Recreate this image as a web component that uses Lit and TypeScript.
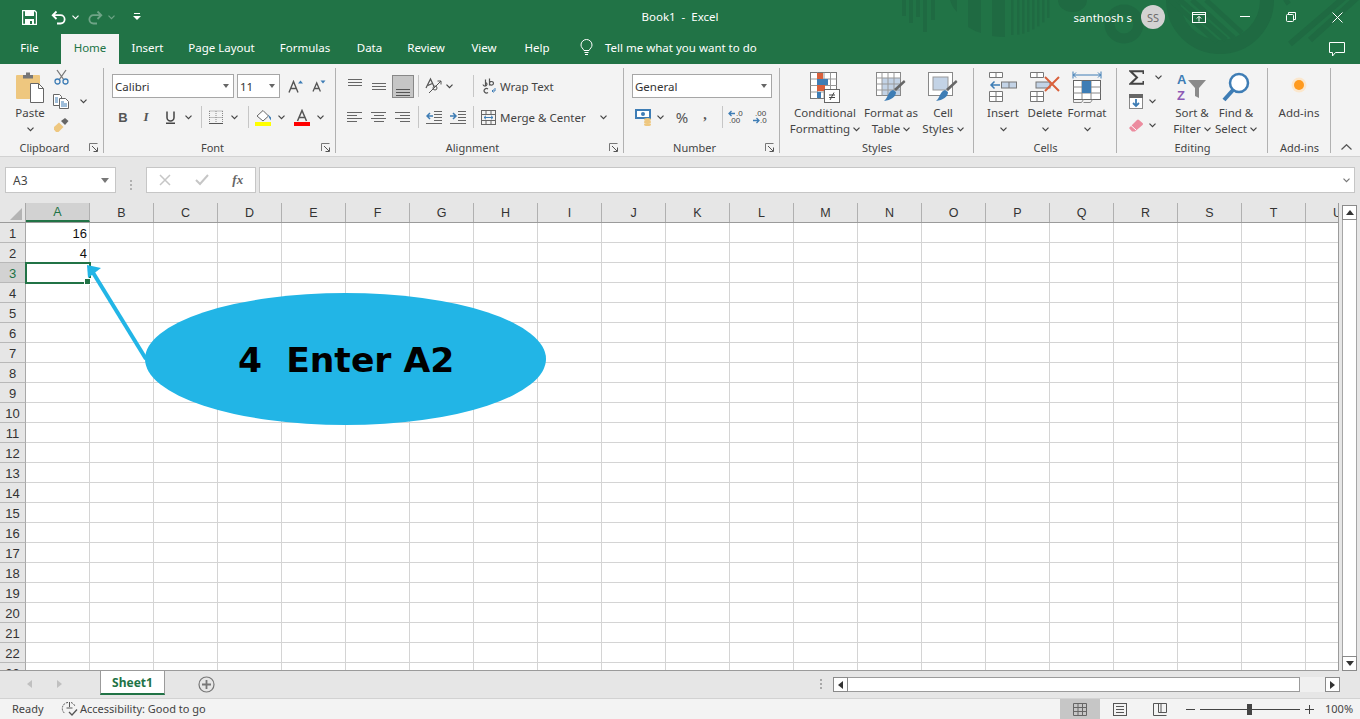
import { LitElement, html, css, svg } from "lit";
import { customElement } from "lit/decorators.js";

const chev = (c = "#444") => html`<svg width="7" height="5" viewBox="0 0 7 5"><path d="M.5.7 3.5 3.7 6.5.7" fill="none" stroke=${c} stroke-width="1.2"/></svg>`;
const lines = (ws: number[], x: number[], y0 = 2, step = 3) => html`<svg width="16" height="14" viewBox="0 0 16 14">${ws.map((w, i) => svg`<rect x=${x[i]} y=${y0 + i * step} width=${w} height="1" fill="#666"></rect>`)}</svg>`;

const I = {
  save: html`<svg width="15" height="15" viewBox="0 0 15 15"><path d="M.5.5h12l2 2v12H.5z" fill="none" stroke="#fff" stroke-width="1.4"/><rect x="3" y="1" width="9" height="5" fill="#fff"/><rect x="3" y="9" width="9" height="5.5" fill="#fff"/><rect x="8" y="11" width="2" height="3" fill="#217346"/></svg>`,
  undo: html`<svg width="15" height="15" viewBox="0 0 15 15"><path d="M5.5 1.5 1.7 5.2 5.5 9M2 5.2h7.5a4 4 0 0 1 0 8.300H6" fill="none" stroke="#fff" stroke-width="1.800"/></svg>`,
  redo: html`<svg width="15" height="15" viewBox="0 0 15 15"><path d="M9.500 1.500 13.300 5.200 9.500 9M13 5.200H5.500a4 4 0 0 0 0 8.300H9" fill="none" stroke="#6fa487" stroke-width="1.800"/></svg>`,
  qat: html`<svg width="8" height="8" viewBox="0 0 8 8"><rect x="1" y="0" width="6" height="1" fill="#fff"/><path d="M0 3h8L4 7z" fill="#fff"/></svg>`,
  decor: html`<svg class="decor" width="480" height="64" viewBox="0 0 480 64"><g fill="#1f6a42"><rect x="22" width="4" height="16"/><rect x="29" width="4" height="23"/><rect x="36" width="4" height="17"/><rect x="43" width="4" height="32"/><rect x="51" width="4" height="20"/><path d="M70 0h7v12q-5-5-7-12z"/><path d="M88 0h13v33q-7-2-13-6z"/><path d="M112 0h13v37q-7 0-13-1z"/>${[131, 137, 142, 147, 152, 157, 162, 167].map((x, i) => svg`<rect x=${x} width="2.500" height=${35 - i * i * .35}></rect>`)}<path d="M178 0h29a14.500 12 0 0 1-29 0z"/></g><g fill="none" stroke="#1f6a42"><circle cx="244" cy="24" r="14.500" stroke-width="10"/><circle cx="340" cy="0" r="47" stroke-width="14"/><path d="M290 0 337 42M300 0 346 40M312 0 354 38M326 0 362 33" stroke-width="5"/><path d="M405 3 409 0M410 44 473-10M430 40 480-5" stroke-width="6"/></g></svg>`,
  present: html`<svg width="14" height="11" viewBox="0 0 14 11"><rect x=".5" y=".5" width="13" height="10" fill="none" stroke="#fff"/><path d="M1 2.500h12" stroke="#fff"/><path d="M7 9.500V4.500M4.800 6.500 7 4.300 9.200 6.500" fill="none" stroke="#fff"/></svg>`,
  min: html`<svg width="10" height="2" viewBox="0 0 10 2"><rect width="10" height="1" fill="#fff"/></svg>`,
  max: html`<svg width="10" height="10" viewBox="0 0 10 10"><rect x=".5" y="2.500" width="7" height="7" rx="1" fill="none" stroke="#fff"/><path d="M2.500 2.500V.5h7v7H7.500" fill="none" stroke="#fff"/></svg>`,
  close: html`<svg width="11" height="11" viewBox="0 0 11 11"><path d="M.5.5 10.500 10.500M10.500.5.5 10.500" stroke="#fff" stroke-width="1"/></svg>`,
  comment: html`<svg width="16" height="15" viewBox="0 0 16 15"><path d="M.5.5h15v10H6.500L3.500 14v-3.500H.5z" fill="none" stroke="#fff"/></svg>`,
  bulb: html`<svg width="13" height="17" viewBox="0 0 13 17"><path d="M4 11.500C3 9.500 1 8.500 1 6a5.500 5.500 0 0 1 11 0c0 2.500-2 3.500-3 5.500zM4.500 13.500h4M5 15.500h3" fill="none" stroke="#fff"/></svg>`,
  paste: html`<svg width="30" height="32" viewBox="0 0 30 32"><rect x="1" y="4" width="24" height="24" rx="1" fill="#eec77f"/><path d="M8 4h3V1.500h4V4h3v3.500H8z" fill="#777"/><path d="M15.500 12.500h8l5 5v14h-13z" fill="#fff" stroke="#666"/><path d="M23.500 12.500v5h5" fill="none" stroke="#666"/></svg>`,
  cut: html`<svg width="15" height="16" viewBox="0 0 15 16"><path d="M3 1 10 11M12 1 5 11" stroke="#777" stroke-width="1.300"/><circle cx="3.500" cy="12.500" r="2.500" fill="none" stroke="#3e7db5" stroke-width="1.300"/><circle cx="11.500" cy="12.500" r="2.500" fill="none" stroke="#3e7db5" stroke-width="1.300"/></svg>`,
  copy: html`<svg width="16" height="15" viewBox="0 0 16 15"><path d="M.5.5h6l2 2v9h-8z" fill="#fff" stroke="#666"/><path d="M6.500 4.500h6l3 3v7h-9z" fill="#fff" stroke="#666"/><path d="M8 8h3M8 10h6M8 12h6M2 4h3M2 6h3M2 8h3" stroke="#3e7db5"/></svg>`,
  brush: html`<svg width="16" height="15" viewBox="0 0 16 15"><path d="M1 9 6 4.500 10.500 9 5.500 14H3L1 11.500z" fill="#eec77f"/><path d="M8 3 12 0l3.500 3-3.500 4z" fill="#666"/></svg>`,
  aUp: html`<svg width="15" height="13" viewBox="0 0 15 13"><path d="M1 12.500 5.500 1.500 10 12.500M2.800 8.500h5.400" fill="none" stroke="#555" stroke-width="1.400"/><path d="M10 3.500 12.500.5 15 3.500z" fill="#3e7db5"/></svg>`,
  aDn: html`<svg width="14" height="12" viewBox="0 0 14 12"><path d="M1 11.500 4.700 3 8.400 11.500M2.500 8.500h4.400" fill="none" stroke="#555" stroke-width="1.300"/><path d="M8.500.5h5L11 3.500z" fill="#3e7db5"/></svg>`,
  under: html`<svg width="9" height="13" viewBox="0 0 9 13"><path d="M1 .5v6a3.500 3.500 0 0 0 7 0V.5" fill="none" stroke="#444" stroke-width="1.500"/><rect y="11.500" width="9" height="1.500" fill="#444"/></svg>`,
  border: html`<svg width="14" height="15" viewBox="0 0 14 15"><path d="M.5 1h13M.5 7.500h13M.5 1v12M7 1v12M13.500 1v12" fill="none" stroke="#888" stroke-dasharray="1 1"/><rect x="0" y="13" width="14" height="1" fill="#555"/></svg>`,
  fill: html`<svg width="17" height="17" viewBox="0 0 17 17"><path d="M2 7 8 1.500 13.500 7 8 12z" fill="#fff" stroke="#666"/><path d="M13 5.500l3 3v3q-2-2-3-6z" fill="#3e7db5"/><rect y="13" width="16" height="4" fill="#ffff00"/></svg>`,
  fontA: html`<svg width="16" height="17" viewBox="0 0 16 17"><path d="M3.500 12 8 1.500 12.500 12M5 8.500h6" fill="none" stroke="#555" stroke-width="1.500"/><rect y="13" width="16" height="4" fill="#ff0000"/></svg>`,
  box: html`<svg width="22" height="23" viewBox="0 0 22 23"><rect x=".5" y=".5" width="21" height="22" fill="#c6c6c6" stroke="#888"/><path d="M4 14.500h14M4 17.500h14M4 20.500h14" stroke="#555"/></svg>`,
  orient: html`<svg width="18" height="18" viewBox="0 0 18 18"><path d="M1 11 5.500 2 9 9.500M2.800 8.500l4.500-2" fill="none" stroke="#555" stroke-width="1.200"/><circle cx="10" cy="11" r="2" fill="none" stroke="#555"/><path d="M4 16 16 4M12.500 4H16v3.500" fill="none" stroke="#555"/></svg>`,
  wrap: html`<svg width="14" height="16" viewBox="0 0 14 16"><path d="M3.500 1.500v6M1 6.500a2 1.800 0 1 0 2.500-2M7.500.5v7M7.500 5a2 1.800 0 1 1 0 .6M6 11a2.400 2.200 0 1 0 0 3.500" fill="none" stroke="#555" stroke-width="1.200"/><path d="M13 10v3h-3M10 13l1.500-1.500M10 13l1.500 1.500" fill="none" stroke="#3e7db5"/></svg>`,
  indL: html`<svg width="16" height="13" viewBox="0 0 16 13"><path d="M8 .5h8M8 3.500h8M8 6.500h8M8 9.500h8M0 12.500h16" stroke="#666" stroke-width="1"/><path d="M7 5H1M4 2 1 5l3 3" fill="none" stroke="#3e7db5" stroke-width="1.500"/></svg>`,
  indR: html`<svg width="16" height="13" viewBox="0 0 16 13"><path d="M8 .5h8M8 3.500h8M8 6.500h8M8 9.500h8M0 12.500h16" stroke="#666" stroke-width="1"/><path d="M0 5h6M3 2l3 3-3 3" fill="none" stroke="#3e7db5" stroke-width="1.500"/></svg>`,
  merge: html`<svg width="15" height="15" viewBox="0 0 15 15"><rect x=".5" y=".5" width="14" height="14" fill="none" stroke="#666"/><path d="M.5 4.500h14M.5 10.500h14M5 .5v4M10 .5v4M5 10.500v4M10 10.500v4" stroke="#666"/><path d="M3 7.500h9M5 5.800 3 7.500 5 9.200M10 5.800 12 7.500 10 9.200" fill="none" stroke="#3e7db5"/></svg>`,
  acct: html`<svg width="17" height="17" viewBox="0 0 17 17"><rect x="1" y="1" width="14" height="8" fill="#fff" stroke="#3e7db5" stroke-width="2"/><circle cx="8" cy="5" r="2" fill="#3e7db5"/><ellipse cx="12.500" cy="10.500" rx="3.500" ry="1.500" fill="#eec77f"/><ellipse cx="12.500" cy="13" rx="3.500" ry="1.500" fill="#eec77f"/><ellipse cx="12.500" cy="15.500" rx="3.500" ry="1.500" fill="#eec77f"/></svg>`,
  incr: html`<svg width="16" height="14" viewBox="0 0 16 14"><path d="M7 3.500H1M3.500 1 1 3.500 3.500 6" fill="none" stroke="#3e7db5" stroke-width="1.300"/><text x="8" y="6" class="dec">.0</text><text x="1" y="13" class="dec">.00</text></svg>`,
  decr: html`<svg width="16" height="14" viewBox="0 0 16 14"><text x="3" y="6" class="dec">.00</text><path d="M1 10.500h6M4.500 8 7 10.500 4.500 13" fill="none" stroke="#3e7db5" stroke-width="1.300"/><text x="8" y="13" class="dec">.0</text></svg>`,
  cond: html`<svg width="30" height="31" viewBox="0 0 30 31"><rect x=".5" y=".5" width="26" height="26" fill="#fff" stroke="#777"/><path d="M7.500.5v26M14 .5v26M20.500.5v26M.5 7h26M.5 13.500h26M.5 20h26" stroke="#999"/><rect x="7" y="1" width="6" height="6" fill="#d9603b"/><rect x="7" y="7" width="11" height="6" fill="#3e7db5"/><rect x="7" y="13" width="8" height="6" fill="#d9603b"/><rect x="7" y="20" width="4" height="6" fill="#3e7db5"/><rect x="14.500" y="17.500" width="15" height="13" fill="#fff" stroke="#666"/><path d="M19 23h6M19 25.500h6M24 20.500 20 28" stroke="#444"/></svg>`,
  tableFmt: html`<svg width="30" height="30" viewBox="0 0 30 30"><rect x=".5" y=".5" width="24" height="23" fill="#fff" stroke="#888"/><rect x="6" y="6" width="18" height="17" fill="#c3d3e6"/><path d="M6 .5v23M12 .5v23M18 .5v23M.5 6h24M.5 12h24M.5 18h24" stroke="#999"/><path d="M28 8 29.500 10 20 19l-2-2z" fill="#666"/><path d="M17 18l3 2c0 5-5 8-12 9 4-3 4-10 9-11z" fill="#3e7db5"/></svg>`,
  cellFmt: html`<svg width="30" height="30" viewBox="0 0 30 30"><rect x=".5" y=".5" width="24" height="23" fill="#fff" stroke="#888"/><rect x="5" y="5" width="15" height="13" fill="#c3d3e6" stroke="#999"/><path d="M28 8 29.500 10 20 19l-2-2z" fill="#666"/><path d="M17 18l3 2c0 5-5 8-12 9 4-3 4-10 9-11z" fill="#3e7db5"/></svg>`,
  ins: html`<svg width="28" height="30" viewBox="0 0 28 30"><path d="M.5.500h13v5H.5zM7 .5v5M.5 19.500h13v10H.5zM.5 24.500h13M7 19.500v10" fill="#fff" stroke="#777"/><rect x="12.500" y="10" width="15" height="6" fill="#c3d3e6" stroke="#777"/><path d="M20 10v6" stroke="#777"/><path d="M11 13H2M5.500 9.500 2 13l3.500 3.500" fill="none" stroke="#3e7db5" stroke-width="1.500"/></svg>`,
  del: html`<svg width="30" height="30" viewBox="0 0 30 30"><path d="M.5.500h13v5H.5zM7 .5v5M.5 19.500h13v10H.5zM.5 24.500h13M7 19.500v10" fill="#fff" stroke="#777"/><rect x="6" y="10" width="14" height="6" fill="#c3d3e6" stroke="#777"/><path d="M15 5 29 19M29 5 15 19" stroke="#d9603b" stroke-width="2"/></svg>`,
  fmt: html`<svg width="30" height="32" viewBox="0 0 30 32"><path d="M1 4h28M1 .5v7M29 .5v7M4 1.500 1.500 4 4 6.500M26 1.500 28.500 4 26 6.500" fill="none" stroke="#3e7db5"/><rect x="1.500" y="9.500" width="27" height="19" fill="#fff" stroke="#666"/><path d="M10 9.500v19M19 9.500v19M1.500 16h27M1.500 22h27" stroke="#888"/><rect x="10" y="10" width="9" height="12" fill="#3e7db5"/><path d="M1.500 28.500v3h8l2-3M11.500 31.500h7l2-3" fill="none" stroke="#888"/></svg>`,
  sigma: html`<svg width="15" height="15" viewBox="0 0 15 15"><path d="M14.500 4V1.200H1.500L8 7.500 1.500 13.800h13V11" fill="none" stroke="#444" stroke-width="2"/></svg>`,
  fillDn: html`<svg width="14" height="15" viewBox="0 0 14 15"><rect x=".5" y="3.500" width="13" height="11" fill="#fff" stroke="#888"/><rect width="14" height="4" fill="#666"/><path d="M7 5v7M4 9l3 3 3-3" fill="none" stroke="#3e7db5" stroke-width="1.800"/></svg>`,
  eraser: html`<svg width="14" height="13" viewBox="0 0 14 13"><path d="M0 9 8 1q1-1 2 0l3.500 3q1 1 0 2L6 12.500H3z" fill="#ec8c9f"/><path d="M2 6.500 7 11" stroke="#fff"/></svg>`,
  sort: html`<svg width="30" height="30" viewBox="0 0 30 30"><text x="0" y="12" class="az a">A</text><text x="0" y="28" class="az z">Z</text><path d="M11 8h18l-7 8v10l-4-2v-8z" fill="#8a8a8a"/></svg>`,
  find: html`<svg width="28" height="31" viewBox="0 0 28 31"><circle cx="17" cy="11" r="9" fill="#fff" stroke="#3e7db5" stroke-width="2.500"/><path d="M11 18 2 28" stroke="#3e7db5" stroke-width="4"/></svg>`,
  dot: html`<svg class="raise" width="18" height="18" viewBox="0 0 18 18"><circle cx="9" cy="9" r="7.500" fill="#fbe7cd"/><circle cx="9" cy="9" r="5" fill="#ff9a1e"/></svg>`,
  launch: html`<svg width="9" height="9" viewBox="0 0 9 9"><path d="M.5 8V.5H8.500" fill="none" stroke="#777"/><path d="M3 3 8 8M4.500 8.500h4v-4" fill="none" stroke="#555"/></svg>`,
  caretUp: html`<svg width="11" height="6" viewBox="0 0 11 6"><path d="M.5 5.500 5.500.7 10.500 5.500" fill="none" stroke="#555" stroke-width="1.200"/></svg>`,
  x: html`<svg width="12" height="12" viewBox="0 0 12 12"><path d="M1 1 11 11M11 1 1 11" stroke="#c6c6c6" stroke-width="1.500"/></svg>`,
  check: html`<svg width="14" height="12" viewBox="0 0 14 12"><path d="M1 6 5 10 13 1" fill="none" stroke="#c6c6c6" stroke-width="2"/></svg>`,
  plus: html`<svg width="17" height="17" viewBox="0 0 17 17"><circle cx="8.500" cy="8.500" r="7.500" fill="none" stroke="#777" stroke-width="1.200"/><path d="M4 8.500h9M8.500 4v9" stroke="#777" stroke-width="1.800"/></svg>`,
  acc: html`<svg width="17" height="16" viewBox="0 0 17 16"><path d="M7 1.500a6 6 0 0 0-3 11M10 1.500a6 6 0 0 1 4 4" fill="none" stroke="#555" stroke-dasharray="2 1"/><path d="M8.500 1v5M5.500 7h6" stroke="#555"/><path d="M8 11 11 14 16 8.500" fill="none" stroke="#555" stroke-width="1.300"/></svg>`,
  vNorm: html`<svg width="14" height="13" viewBox="0 0 14 13"><path d="M.5.500h13v12H.5zM.5 4.500h13M.5 8.500h13M5 .5v12M9.500.5v12" fill="none" stroke="#666"/></svg>`,
  vPage: html`<svg width="14" height="13" viewBox="0 0 14 13"><rect x=".5" y=".5" width="13" height="12" fill="none" stroke="#555"/><path d="M3 3.500h8M3 6.500h8M3 9.500h8" stroke="#555"/></svg>`,
  vBreak: html`<svg width="14" height="13" viewBox="0 0 14 13"><path d="M.5 12.500V.5h13v9H8V.5M8 9.500H5.500V.5M.5 12.500h13" fill="none" stroke="#555"/></svg>`,
};

const big = (icon: unknown, a: string, b: string | null, arrowLine = false, w = 42) => html`
  <div class="big" style="width:${w}px">
    <div class="bigicon">${icon}</div>
    <div class="bl">${a}</div>
    ${arrowLine
      ? html`<div class="bc">${chev()}</div>`
      : html`<div class="bl">${b ?? ""}${b ? html`<span class="inlchev">${chev()}</span>` : ""}</div>`}
  </div>`;

const c = (w: number, content: unknown = "") => html`<div class="c" style="width:${w}px">${content}</div>`;
const sep = (w: number) => c(w, html`<div class="vs"></div>`);
const sel = (w: number, t: string) => html`<div class="sel" style="width:${w}px"><span>${t}</span><i></i></div>`;

const cols = "ABCDEFGHIJKLMNOPQRSTU".split("");
const rows = Array.from({ length: 23 }, (_, i) => i + 1);
const tabs: [string, number][] = [["File", 59], ["Home", 60], ["Insert", 57], ["Page Layout", 91], ["Formulas", 76], ["Data", 53], ["Review", 60], ["View", 56], ["Help", 50]];

@customElement("app-root")
export class AppRoot extends LitElement {
  static styles = css`
    :host { display: block; width: 1360px; height: 719px; overflow: hidden; position: relative; background: #e6e6e6; font: 12px "Noto Sans", sans-serif; color: #333; }
    svg { display: block; flex: none; }
    .dec { font: 8px "Liberation Sans", sans-serif; fill: #444; }
    .az { font: bold 13px "Liberation Sans", sans-serif; }
    .a { fill: #3e7db5; } .z { fill: #8e5bb5; }
    header { position: relative; height: 64px; background: #217346; color: #fff; overflow: hidden; }
    .decor { position: absolute; left: 880px; top: 0; }
    .title { position: relative; height: 34px; display: flex; align-items: center; }
    .qat { display: flex; align-items: center; margin-left: 22px; width: 220px; }
    .qat .s { width: 7px; margin-left: 6px; margin-right: 9px; }
    .qat .sd { width: 7px; margin-left: 5px; margin-right: 18px; }
    .name { position: absolute; left: 0; right: 0; top: 9px; text-align: center; white-space: pre; font-size: 11.500px; }
    .user { margin-left: auto; display: flex; align-items: center; font-size: 11.500px; }
    .av { width: 24px; height: 24px; border-radius: 50%; background: #d2d2d2; color: #6b6b6b; display: flex; align-items: center; justify-content: center; font-size: 11px; margin: 0 11px 0 9px; }
    .wb { display: flex; align-items: center; justify-content: center; width: 46px; height: 30px; }
    .tabs { position: relative; height: 30px; display: flex; align-items: stretch; font-size: 11.500px; }
    .tab { display: flex; align-items: center; justify-content: center; padding-bottom: 3px; box-sizing: border-box; }
    .tab.on { background: #f3f3f3; color: #217346; margin-left: 2px; width: 58px !important; }
    .tell { display: flex; align-items: center; gap: 12px; margin-left: 18px; padding-bottom: 3px; }
    .cmt { margin-left: auto; margin-right: 15px; align-self: center; }

    .ribbon { display: flex; height: 93px; background: #f3f3f3; border-bottom: 1px solid #d2d2d2; box-sizing: border-box; font-size: 11.500px; color: #444; }
    .g { position: relative; display: flex; flex-direction: column; flex: none; box-sizing: border-box; }
    .g::after { content: ""; position: absolute; right: 0; top: 4px; bottom: 3px; width: 1px; background: #b1b1b1; }
    .body { flex: 1; display: flex; min-height: 0; }
    .ft { height: 18px; display: flex; align-items: center; }
    .ft span { flex: 1; text-align: center; font-size: 11px; color: #444; }
    .ft .l { flex: none; width: 15px; }
    .big { display: flex; flex-direction: column; align-items: center; flex: none; white-space: nowrap; }
    .big > * { flex: none; }
    .bigicon { height: 36px; margin-top: 5px; display: flex; align-items: center; justify-content: center; }
    .raise { margin-top: -5px; }
    .bl { height: 16px; line-height: 16px; display: flex; align-items: center; gap: 3px; }
    .bc { height: 16px; display: flex; align-items: center; }
    .c { flex: none; display: flex; align-items: center; justify-content: center; height: 100%; }
    .vs { width: 1px; height: 22px; background: #c6c6c6; flex: none; }
    .stack { display: flex; flex-direction: column; padding-top: 1px; }
    .sr { height: 24px; display: flex; align-items: center; }
    .rows { display: flex; flex-direction: column; gap: 5px; padding: 9px 0 0 8px; }
    .r { display: flex; height: 26px; align-items: center; }
    .sel { flex: none; height: 24px; box-sizing: border-box; background: #fff; border: 1px solid #a6a6a6; display: flex; align-items: center; padding-left: 2px; font-size: 11.500px; color: #333; margin-right: 3px; }
    .sel span { flex: 1; }
    .sel i { border: 3.500px solid transparent; border-top: 4px solid #666; border-bottom: 0; margin-right: 4px; }
    .b { font: bold 13px "Liberation Sans", sans-serif; color: #555; }
    .it { font: italic bold 13px "Liberation Serif", serif; color: #555; }
    .t { white-space: nowrap; color: #444; }
    .t.fix { width: 100%; text-align: left; }
    .pct { font-size: 15px; color: #555; }
    .comma { font: bold 14px "Liberation Serif", serif; color: #555; margin-top: -4px; }
    .collapse { flex: 1; display: flex; align-items: flex-end; justify-content: flex-end; padding: 0 8px 6px 0; }
    .fbar { height: 46px; display: flex; align-items: flex-start; padding: 10px 0 0 5px; box-sizing: border-box; background: #e6e6e6; }
    .fbox { height: 26px; box-sizing: border-box; background: #fff; border: 1px solid #c6c6c6; display: flex; align-items: center; flex: none; }
    .nm { width: 111px; padding: 0 6px 0 7px; justify-content: space-between; font-size: 12px; color: #444; }
    .nm i { border: 4px solid transparent; border-top: 5px solid #777; border-bottom: 0; }
    .dots { width: 30px; display: flex; flex-direction: column; align-items: center; gap: 2px; align-self: center; flex: none; }
    .dots b { width: 2px; height: 2px; background: #b1b1b1; }
    .fx { width: 110px; justify-content: space-around; margin-right: 3px; }
    .fxt { font: italic bold 13px "Liberation Serif", serif; color: #666; }
    .inp { width: 1096px; justify-content: flex-end; padding-right: 4px; }
    .sheet { height: 468px; display: flex; position: relative; }
    .grid { width: 1339px; flex: none; border-right: 1px solid #9b9b9b; border-bottom: 1px solid #9b9b9b; box-sizing: border-box; overflow: hidden; position: relative; background: #fff; }
    .rw { display: flex; height: 20px; }
    .hd { height: 20px; background: #e6e6e6; display: flex; border-bottom: 1px solid #9b9b9b; box-sizing: border-box; }
    .rh { flex: none; width: 26px; box-sizing: border-box; background: #e6e6e6; border-right: 1px solid #a8a8a8; border-bottom: 1px solid #b8b8b8; display: flex; align-items: center; justify-content: center; padding-top: 1px; font: 13px "Liberation Sans", sans-serif; color: #333; }
    .rh.on { background: #d2d2d2; color: #217346; }
    .corner { flex: none; width: 26px; box-sizing: border-box; border-right: 1px solid #a8a8a8; position: relative; }
    .tri { position: absolute; right: 3px; bottom: 2px; width: 0; height: 0; border-style: solid; border-width: 0 0 12px 12px; border-color: transparent transparent #b4b4b4 transparent; }
    .ch { flex: none; width: 64px; box-sizing: border-box; border-right: 1px solid #b0b0b0; display: flex; align-items: center; justify-content: center; padding-top: 1px; font: 12.500px "Liberation Sans", sans-serif; color: #333; height: 19px; }
    .ch.on { background: #d2d2d2; color: #217346; border-bottom: 2px solid #217346; }
    .cell { flex: none; width: 64px; box-sizing: border-box; border-right: 1px solid #d4d4d4; border-bottom: 1px solid #d4d4d4; text-align: right; padding: 3px 2px 0 0; font: 13px "Liberation Sans", sans-serif; color: #111; }
    .cur { position: absolute; left: 25px; top: 59px; width: 66px; height: 22px; box-sizing: border-box; border: 2px solid #217346; }
    .cur::after { content: ""; position: absolute; right: -2px; bottom: -3px; width: 5px; height: 5px; background: #217346; border: 1px solid #fff; }
    .vsb { flex: 1; display: flex; flex-direction: column; align-items: flex-start; padding: 2px 0 0 3px; }
    .sbtn { width: 15px; height: 15px; box-sizing: border-box; background: #fff; border: 1px solid #8a8a8a; display: flex; align-items: center; justify-content: center; flex: none; }
    .trk { flex: 1; width: 15px; box-sizing: border-box; background: #fff; border: 1px solid #a6a6a6; border-width: 0 1px; }
    .up { border: 4px solid transparent; border-bottom: 5px solid #333; border-top: 0; }
    .dn { border: 4px solid transparent; border-top: 5px solid #333; border-bottom: 0; }
    .lf { border: 4px solid transparent; border-right: 5px solid #333; border-left: 0; }
    .rt { border: 4px solid transparent; border-left: 5px solid #333; border-right: 0; }
    .lfg { border: 4px solid transparent; border-right: 5px solid #c0c0c0; border-left: 0; }
    .rtg { border: 4px solid transparent; border-left: 5px solid #c0c0c0; border-right: 0; }
    .tabbar { height: 27px; display: flex; align-items: flex-start; background: #e6e6e6; }
    .nav { width: 100px; height: 26px; display: flex; align-items: center; padding-left: 27px; gap: 25px; box-sizing: border-box; flex: none; }
    .sheet1 { flex: none; width: 65px; height: 25px; box-sizing: border-box; margin-top: -1px; padding-top: 2px; background: #fff; border: 1px solid #9b9b9b; border-top: 0; border-bottom: 2px solid #217346; color: #217346; font-weight: 700; font-size: 12px; display: flex; align-items: center; justify-content: center; }
    .add { margin: 5px 0 0 33px; }
    .sdots { margin: 8px 0 0 605px; display: flex; flex-direction: column; gap: 2px; width: 2px; }
    .sdots b { width: 2px; height: 2px; background: #a8a8a8; }
    .hs { margin-left: 11px; margin-top: 6px; display: flex; align-items: stretch; height: 15px; }
    .hs .sbtn { width: 15px; }
    .thumb { width: 452px; background: #fff; border: 1px solid #9b9b9b; border-left: 0; box-sizing: border-box; }
    .rest { width: 25px; background: #f0f0f0; }
    .status { height: 21px; background: #f3f3f3; border-top: 1px solid #d2d2d2; box-sizing: border-box; display: flex; align-items: center; font-size: 11px; color: #444; }
    .ready { margin-left: 12px; width: 49px; padding-bottom: 2px; }
    .acc { display: flex; align-items: center; gap: 2px; }
    .acc span { padding-bottom: 2px; }
    .vb { margin-left: auto; display: flex; align-items: center; height: 20px; }
    .vbtn { width: 40px; height: 20px; display: flex; align-items: center; justify-content: center; }
    .vbtn.on { background: #c6c6c6; }
    .zoom { display: flex; align-items: center; margin-left: 6px; }
    .slider { width: 100px; height: 1px; background: #444; position: relative; margin: 0 5px; }
    .slider::after { content: ""; position: absolute; left: 47px; top: -5px; width: 5px; height: 11px; background: #444; }
    .pm { width: 9px; height: 1px; background: #444; position: relative; flex: none; }
    .pm.p::after { content: ""; position: absolute; left: 4px; top: -4px; width: 1px; height: 9px; background: #444; }
    .zv { width: 27px; margin: 0 8px 2px 11px; }
    .anno { position: absolute; left: 0; top: 0; pointer-events: none; }
    .anno text { font: bold 34.600px "DejaVu Sans", sans-serif; fill: #000; white-space: pre; }
  `;

  render() {
    return html`
      <header>
        ${I.decor}
        <div class="title">
          <div class="qat">${I.save}<span style="width:14px"></span>${I.undo}<span class="s">${chev("#fff")}</span>${I.redo}<span class="sd">${chev("#6fa487")}</span>${I.qat}</div>
          <div class="name">Book1  -  Excel</div>
          <div class="user">santhosh s<div class="av">SS</div><div class="wb">${I.present}</div><div class="wb">${I.min}</div><div class="wb">${I.max}</div><div class="wb">${I.close}</div></div>
        </div>
        <div class="tabs">
          ${tabs.map(([t, w]) => html`<div class="tab ${t === "Home" ? "on" : ""}" style="width:${w}px">${t}</div>`)}
          <div class="tell">${I.bulb}<span>Tell me what you want to do</span></div>
          <div class="cmt">${I.comment}</div>
        </div>
      </header>
      <section class="ribbon">
        <div class="g" style="width:104px">
          <div class="body">
            ${c(14)}
            ${big(I.paste, "Paste", null, true, 32)}
            <div class="stack" style="width:50px">
              <div class="sr">${c(30, I.cut)}</div>
              <div class="sr">${c(30, I.copy)}${c(14, chev())}</div>
              <div class="sr">${c(30, I.brush)}</div>
            </div>
          </div>
          <div class="ft"><span>Clipboard</span><div class="l">${I.launch}</div></div>
        </div>
        <div class="g" style="width:232px">
          <div class="body"><div class="rows">
            <div class="r">${sel(122, "Calibri")}${sel(43, "11")}${c(24, I.aUp)}${c(23, I.aDn)}</div>
            <div class="r">${c(22, html`<span class="b">B</span>`)}${c(24, html`<span class="it">I</span>`)}${c(24, I.under)}${c(12, chev())}${sep(14)}${c(16, I.border)}${c(20, chev())}${sep(8)}${c(22, I.fill)}${c(14, chev())}${c(28, I.fontA)}${c(8, chev())}</div>
          </div></div>
          <div class="ft"><span>Font</span><div class="l">${I.launch}</div></div>
        </div>
        <div class="g" style="width:288px">
          <div class="body"><div class="rows">
            <div class="r">${c(22, lines([14, 14, 14], [1, 1, 1], 0))}${c(26, lines([14, 14, 14], [1, 1, 1], 4))}${c(22, I.box)}${sep(8)}${c(24, I.orient)}${c(6, chev())}${c(17)}${sep(8)}${c(23, I.wrap)}<span class="t">Wrap Text</span></div>
            <div class="r">${c(22, lines([15, 10, 15, 10], [0, 0, 0, 0], 2))}${c(26, lines([15, 10, 15, 10], [0, 3, 0, 3], 2))}${c(22, lines([15, 10, 15, 10], [0, 5, 0, 5], 2))}${sep(8)}${c(24, I.indL)}${c(24, I.indR)}${sep(6)}${c(24, I.merge)}${c(96, html`<span class="t fix">Merge &amp; Center</span>`)}${c(14, chev())}</div>
          </div></div>
          <div class="ft"><span>Alignment</span><div class="l">${I.launch}</div></div>
        </div>
        <div class="g" style="width:156px">
          <div class="body"><div class="rows">
            <div class="r">${sel(140, "General")}</div>
            <div class="r">${c(22, I.acct)}${c(12, chev())}${c(32, html`<span class="pct">%</span>`)}${c(14, html`<span class="comma">,</span>`)}${sep(20)}${c(8, I.incr)}${c(40, I.decr)}</div>
          </div></div>
          <div class="ft"><span>Number</span><div class="l">${I.launch}</div></div>
        </div>
        <div class="g" style="width:194px">
          <div class="body">${c(5)}${big(I.cond, "Conditional", "Formatting", false, 80)}${big(I.tableFmt, "Format as", "Table", false, 52)}${big(I.cellFmt, "Cell", "Styles", false, 52)}</div>
          <div class="ft"><span>Styles</span></div>
        </div>
        <div class="g" style="width:143px">
          <div class="body">${c(8)}${big(I.ins, "Insert", "", true)}${big(I.del, "Delete", "", true)}${big(I.fmt, "Format", "", true)}</div>
          <div class="ft"><span>Cells</span></div>
        </div>
        <div class="g" style="width:151px">
          <div class="body">
            <div class="stack" style="width:53px">
              <div class="sr">${c(4)}${c(30, I.sigma)}${c(14, chev())}</div>
              <div class="sr">${c(4)}${c(30, I.fillDn)}${c(3, chev())}</div>
              <div class="sr">${c(4)}${c(30, I.eraser)}${c(3, chev())}</div>
            </div>
            ${big(I.sort, "Sort &", "Filter", false, 44)}${big(I.find, "Find &", "Select", false, 44)}
          </div>
          <div class="ft"><span>Editing</span></div>
        </div>
        <div class="g" style="width:63px">
          <div class="body">${big(I.dot, "Add-ins", "", false, 62)}</div>
          <div class="ft"><span>Add-ins</span></div>
        </div>
        <div class="collapse">${I.caretUp}</div>
      </section>
      <section class="fbar">
        <div class="fbox nm"><span>A3</span><i></i></div>
        <div class="dots"><b></b><b></b><b></b></div>
        <div class="fbox fx">${I.x}${I.check}<span class="fxt">fx</span></div>
        <div class="fbox inp">${chev("#777")}</div>
      </section>
      <section class="sheet">
        <div class="grid">
          <div class="hd"><div class="corner"><div class="tri"></div></div>${cols.map((l) => html`<div class="ch ${l === "A" ? "on" : ""}">${l}</div>`)}</div>
          ${rows.map((n) => html`<div class="rw"><div class="rh ${n === 3 ? "on" : ""}">${n}</div>${cols.map((l) => html`<div class="cell">${l === "A" && n === 1 ? "16" : l === "A" && n === 2 ? "4" : ""}</div>`)}</div>`)}
          <div class="cur"></div>
        </div>
        <div class="vsb"><div class="sbtn"><i class="up"></i></div><div class="trk"></div><div class="sbtn"><i class="dn"></i></div></div>
      </section>
      <section class="tabbar">
        <div class="nav"><i class="lfg"></i><i class="rtg"></i></div>
        <div class="sheet1">Sheet1</div>
        <div class="add">${I.plus}</div>
        <div class="sdots"><b></b><b></b><b></b></div>
        <div class="hs"><div class="sbtn"><i class="lf"></i></div><div class="thumb"></div><div class="rest"></div><div class="sbtn"><i class="rt"></i></div></div>
      </section>
      <footer class="status">
        <div class="ready">Ready</div>
        <div class="acc">${I.acc}<span>Accessibility: Good to go</span></div>
        <div class="vb">
          <div class="vbtn on">${I.vNorm}</div><div class="vbtn">${I.vPage}</div><div class="vbtn">${I.vBreak}</div>
          <div class="zoom"><div class="pm"></div><div class="slider"></div><div class="pm p"></div><div class="zv">100%</div></div>
        </div>
      </footer>
      <svg class="anno" width="1360" height="719" viewBox="0 0 1360 719">
        <path d="M146 359 92 271" stroke="#22b5e6" stroke-width="4" fill="none"/>
        <path d="M87 265 101 268 88 278z" fill="#22b5e6"/>
        <ellipse cx="345.500" cy="359" rx="200.500" ry="66" fill="#22b5e6"/>
        <text x="238" y="372">4  Enter A2</text>
      </svg>
    `;
  }
}
